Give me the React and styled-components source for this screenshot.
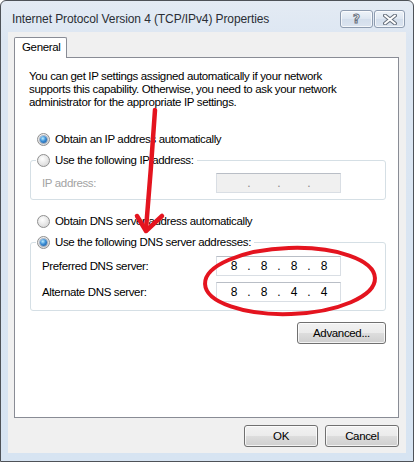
import React from "react";
import styled, { createGlobalStyle, css } from "styled-components";

const GlobalStyle = createGlobalStyle`
  html, body { margin: 0; padding: 0; background: #ffffff; }
  body { font-family: "Liberation Sans", Arial, sans-serif; }
  * { box-sizing: border-box; }
`;

const FONT = `"Liberation Sans", Arial, sans-serif`;

const bodyText = css`
  font-family: ${FONT};
  font-size: 11.5px;
  letter-spacing: -0.35px;
`;

const Window = styled.div`
  position: relative;
  width: 414px;
  height: 462px;
  border: 1px solid #4e5258;
  border-radius: 6px 6px 0 0;
  background: linear-gradient(#e4ebf4 0px, #dce6f2 40px, #d7e4f2 100%);
  display: flex;
  flex-direction: column;
  font-family: ${FONT};
  overflow: hidden;
`;

const TitleBar = styled.div`
  height: 31px;
  display: flex;
  align-items: flex-start;
  padding-left: 11px;
`;

const TitleText = styled.div`
  margin-top: 10px;
  font-size: 12px;
  letter-spacing: -0.1px;
  line-height: 16px;
  color: #2a2e35;
  white-space: nowrap;
`;

const CaptionButtons = styled.div`
  margin-left: auto;
  margin-right: 8px;
  margin-top: 9px;
  display: flex;
  gap: 1px;
`;

const CaptionButton = styled.div`
  width: ${(p) => p.$w}px;
  height: 18px;
  border: 1px solid #8e9cb0;
  border-radius: 3px;
  background: linear-gradient(#eef3f9, #dde6f1 50%, #d3deec 51%, #dbe4f0);
  box-shadow: inset 0 0 0 1px rgba(255, 255, 255, 0.7);
  display: flex;
  align-items: center;
  justify-content: center;
`;

const HelpGlyph = styled.span`
  font-family: "DejaVu Sans", sans-serif;
  font-weight: bold;
  font-size: 12px;
  line-height: 12px;
  color: #ffffff;
  -webkit-text-stroke: 1px #68717e;
`;

const Client = styled.div`
  flex: 1;
  margin: 0 7px 8px 7px;
  background: #f0f0f0;
  padding: 5px 7px 6px 6px;
  display: flex;
  flex-direction: column;
`;

const TabStrip = styled.div`
  display: flex;
  height: 20px;
`;

const Tab = styled.div`
  position: relative;
  z-index: 1;
  width: 53px;
  height: 21px;
  border: 1px solid #898c95;
  border-bottom: none;
  border-radius: 2px 2px 0 0;
  background: #ffffff;
  ${bodyText};
  line-height: 19px;
  padding-left: 7px;
  color: #000;
`;

const Panel = styled.div`
  width: 385px;
  height: 361px;
  border: 1px solid #898c95;
  background: #ffffff;
  padding: 12px 12px 0 14px;
  display: flex;
  flex-direction: column;
`;

const Description = styled.p`
  margin: 0;
  ${bodyText};
  line-height: 13px;
  color: #000;
`;

const RadioRow = styled.div`
  display: flex;
  align-items: center;
  height: 16px;
  gap: 5px;
  ${bodyText};
  color: #000;
  margin-top: ${(p) => p.$mt || 0}px;
  margin-left: ${(p) => (p.$ml === undefined ? 8 : p.$ml)}px;
  white-space: nowrap;
`;

const RadioCircle = styled.span`
  width: 13px;
  height: 13px;
  flex: none;
  border-radius: 50%;
  border: 1px solid #8f8f8f;
  background: radial-gradient(circle at 40% 35%, #ffffff 0%, #eaeaea 45%, #cfcfcf 100%);
  display: flex;
  align-items: center;
  justify-content: center;
  ${(p) =>
    p.$checked &&
    css`
      &::after {
        content: "";
        width: 7px;
        height: 7px;
        border-radius: 50%;
        background: radial-gradient(circle at 40% 35%, #b9ecff 0%, #3d8fd6 45%, #134f95 100%);
        box-shadow: 0 0 0 1px rgba(30, 70, 120, 0.35);
      }
    `}
`;

const GroupBox = styled.div`
  margin-left: 1px;
  margin-top: ${(p) => p.$mt}px;
  width: 356px;
  border: 1px solid #d5dfe5;
  border-radius: 3px;
  padding: 0 0 ${(p) => p.$pb}px 11px;
  display: flex;
  flex-direction: column;
  gap: 6px;
`;

const Legend = styled.div`
  margin-top: -9px;
  margin-left: -6px;
  margin-bottom: ${(p) => p.$mb}px;
  align-self: flex-start;
  background: #ffffff;
  padding: 0 3px 0 1px;
`;

const FieldRow = styled.div`
  display: grid;
  grid-template-columns: 174px 125px;
  align-items: center;
  height: 20px;
`;

const FieldLabel = styled.span`
  ${bodyText};
  color: ${(p) => (p.$disabled ? "#a3a3a3" : "#000")};
`;

const IpField = styled.div`
  height: 20px;
  border: 1px solid #d9dee4;
  border-top-color: #b9bec6;
  background: ${(p) => (p.$disabled ? "#f0f0f0" : "#ffffff")};
  display: flex;
  align-items: center;
  padding-left: 6px;
  font-family: ${FONT};
  font-size: 12px;
  color: ${(p) => (p.$disabled ? "#8a8a8a" : "#000")};
`;

const Octet = styled.span`
  width: 22px;
  text-align: center;
`;

const Sep = styled.span`
  width: 8px;
  text-align: center;
`;

const PushButton = styled.button`
  width: ${(p) => p.$w}px;
  height: 22px;
  padding: 0;
  border: 1px solid #707070;
  border-radius: 3px;
  background: linear-gradient(#f2f2f2 0%, #ebebeb 50%, #dddddd 51%, #cfcfcf 100%);
  box-shadow: inset 0 0 0 1px rgba(255, 255, 255, 0.75);
  ${bodyText};
  color: #000;
`;

const AdvancedButton = styled(PushButton)`
  align-self: flex-end;
  margin-top: 11px;
`;

const ButtonRow = styled.div`
  margin-top: 7px;
  display: flex;
  justify-content: flex-end;
  gap: 7px;
`;

const Annotations = styled.svg`
  position: absolute;
  left: -1px;
  top: -1px;
  width: 414px;
  height: 462px;
  pointer-events: none;
`;

function Radio({ checked, children, mt, ml }) {
  return (
    <RadioRow $mt={mt} $ml={ml}>
      <RadioCircle $checked={checked} />
      <span>{children}</span>
    </RadioRow>
  );
}

function Ip({ parts, disabled }) {
  return (
    <IpField $disabled={disabled}>
      <Octet>{parts[0]}</Octet>
      <Sep>.</Sep>
      <Octet>{parts[1]}</Octet>
      <Sep>.</Sep>
      <Octet>{parts[2]}</Octet>
      <Sep>.</Sep>
      <Octet>{parts[3]}</Octet>
    </IpField>
  );
}

export default function App() {
  return (
    <>
      <GlobalStyle />
      <Window>
        <TitleBar>
          <TitleText>Internet Protocol Version 4 (TCP/IPv4) Properties</TitleText>
          <CaptionButtons>
            <CaptionButton $w={33}>
              <HelpGlyph>?</HelpGlyph>
            </CaptionButton>
            <CaptionButton $w={31}>
              <svg width="14" height="11" viewBox="0 0 14 11">
                <path
                  d="M2 1.5 L12 9.5 M12 1.5 L2 9.5"
                  stroke="#68717e"
                  strokeWidth="4"
                  strokeLinecap="round"
                />
                <path
                  d="M2 1.5 L12 9.5 M12 1.5 L2 9.5"
                  stroke="#ffffff"
                  strokeWidth="2"
                  strokeLinecap="round"
                />
              </svg>
            </CaptionButton>
          </CaptionButtons>
        </TitleBar>
        <Client>
          <TabStrip>
            <Tab>General</Tab>
          </TabStrip>
          <Panel>
            <Description>
              You can get IP settings assigned automatically if your network
              <br />
              supports this capability. Otherwise, you need to ask your network
              <br />
              administrator for the appropriate IP settings.
            </Description>
            <Radio checked mt={22}>
              Obtain an IP address automatically
            </Radio>
            <GroupBox $mt={13} $pb={6}>
              <Legend $mb={-1}>
                <Radio ml={0}>Use the following IP address:</Radio>
              </Legend>
              <FieldRow>
                <FieldLabel $disabled>IP address:</FieldLabel>
                <Ip parts={["", "", "", ""]} disabled />
              </FieldRow>
            </GroupBox>
            <Radio mt={13}>Obtain DNS server address automatically</Radio>
            <GroupBox $mt={13} $pb={8}>
              <Legend $mb={0}>
                <Radio checked ml={0}>
                  Use the following DNS server addresses:
                </Radio>
              </Legend>
              <FieldRow>
                <FieldLabel>Preferred DNS server:</FieldLabel>
                <Ip parts={["8", "8", "8", "8"]} />
              </FieldRow>
              <FieldRow>
                <FieldLabel>Alternate DNS server:</FieldLabel>
                <Ip parts={["8", "8", "4", "4"]} />
              </FieldRow>
            </GroupBox>
            <AdvancedButton $w={89}>Advanced...</AdvancedButton>
          </Panel>
          <ButtonRow>
            <PushButton $w={74}>OK</PushButton>
            <PushButton $w={74}>Cancel</PushButton>
          </ButtonRow>
        </Client>
        <Annotations viewBox="0 0 414 462">
          <g fill="none" stroke="#e4141f" strokeLinecap="round" strokeLinejoin="round">
            <path d="M155 110 Q151 170 146 229" strokeWidth="4.5" />
            <path d="M137 216 L146 231 L162 216" strokeWidth="4.5" />
            <ellipse cx="290" cy="281" rx="85" ry="33" strokeWidth="4" transform="rotate(-2 290 281)" />
          </g>
        </Annotations>
      </Window>
    </>
  );
}
